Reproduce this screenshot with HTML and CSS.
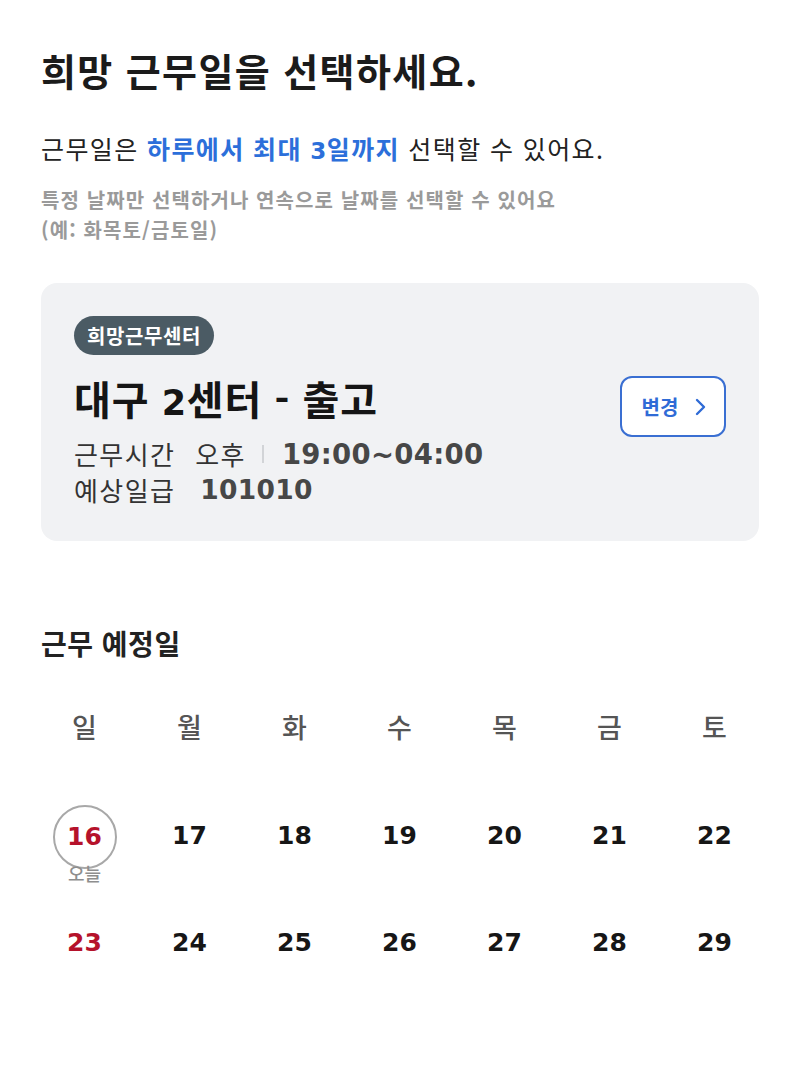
FILE: index.html
```html
<!DOCTYPE html>
<html lang="ko">
<head>
<meta charset="utf-8">
<link rel="stylesheet" href="styles.css">
</head>
<body>
<div class="page">
  <h1 class="title">희망 근무일을 선택하세요.</h1>
  <p class="lead">근무일은 <b class="blue">하루에서 최대 <span class="d">3</span>일까지</b> 선택할 수 있어요.</p>
  <p class="note">특정 날짜만 선택하거나 연속으로 날짜를 선택할 수 있어요<br>(예: 화목토/금토일)</p>

  <div class="card">
    <div class="card-main">
      <span class="badge">희망근무센터</span>
      <div class="center-name">대구 <span class="d">2</span>센터 - 출고</div>
      <div class="info first"><span class="label">근무시간</span><span class="val-r">오후</span><span class="sep"></span><span class="val-b">19:00~04:00</span></div>
      <div class="info"><span class="label">예상일급</span><span class="val-b">101010</span></div>
    </div>
    <button class="change">변경<svg width="16" height="20" viewBox="0 0 16 20"><path d="M5 3 L12 10 L5 17" fill="none" stroke="#2f6bd6" stroke-width="2.4" stroke-linecap="round" stroke-linejoin="round"/></svg></button>
  </div>

  <h2 class="section">근무 예정일</h2>
</div>
<div class="cal">
  <div class="wd">일</div><div class="wd">월</div><div class="wd">화</div><div class="wd">수</div><div class="wd">목</div><div class="wd">금</div><div class="wd">토</div>
  <div class="day sun today"><span class="circle">16</span><span class="today-lbl">오늘</span></div>
  <div class="day">17</div><div class="day">18</div><div class="day">19</div><div class="day">20</div><div class="day">21</div><div class="day">22</div>
  <div class="day sun">23</div>
  <div class="day">24</div><div class="day">25</div><div class="day">26</div><div class="day">27</div><div class="day">28</div><div class="day">29</div>
</div>
</body>
</html>
```
FILE: styles.css
```css
* { box-sizing: border-box; }
html, body { margin: 0; padding: 0; background: #fff; }
body {
  font-family: "Noto Sans CJK KR", "Noto Sans", sans-serif;
  color: #1a1a1a;
  width: 800px;
}
.d { font-family: "DejaVu Sans", "Noto Sans CJK KR", sans-serif; font-weight: 700; }
.page { padding: 40px 41px 0 41px; }
.title {
  margin: 0;
  font-size: 38px;
  font-weight: 700;
  line-height: 60px;
  letter-spacing: 1.4px;
  color: #1b1b1b;
}
.lead {
  margin: 30px 0 0 0;
  font-size: 25px;
  line-height: 36px;
  color: #222;
  letter-spacing: 1.4px;
}
.lead .d { font-size: 23px; letter-spacing: 0.5px; }
.blue { color: #2c6fda; font-weight: 700; }
.note {
  margin: 16px 0 0 0;
  font-size: 20px;
  line-height: 30px;
  color: #9a9a9a;
  font-weight: 700;
  letter-spacing: 1.1px;
}
.card {
  margin-top: 38px;
  background: #f1f2f4;
  border-radius: 16px;
  height: 258px;
  padding: 33px 33px 0 33px;
  display: flex;
  justify-content: space-between;
  align-items: flex-start;
}
.badge {
  display: inline-block;
  background: #4b5b64;
  color: #fff;
  font-size: 20px;
  font-weight: 700;
  line-height: 39px;
  height: 39px;
  padding: 0 13px;
  border-radius: 20px;
  letter-spacing: 0.6px;
}
.center-name {
  margin-top: 18px;
  font-size: 40px;
  font-weight: 700;
  line-height: 50px;
  color: #151515;
  letter-spacing: 1px;
}
.center-name .d { font-size: 35px; letter-spacing: 0.5px; }
.info {
  display: flex;
  align-items: center;
  font-size: 26px;
  line-height: 36px;
  color: #333;
  letter-spacing: 1.4px;
}
.info.first { margin-top: 8px; }
.label { margin-right: 20px; }
.sep { width: 2px; height: 18px; background: #d2d4d7; margin: 0 18px 0 16px; }
.val-b {
  font-family: "DejaVu Sans", sans-serif;
  font-weight: 700;
  font-size: 27.5px;
  color: #474747;
  letter-spacing: 0.3px;
}
.label + .val-b { margin-left: 5px; font-size: 26.5px; }
.change {
  margin-top: 60px;
  width: 106px;
  height: 61px;
  background: #fff;
  border: 2px solid #3a6fd2;
  border-radius: 12px;
  color: #2f6bd6;
  font-family: inherit;
  font-size: 20px;
  font-weight: 700;
  display: flex;
  align-items: center;
  justify-content: center;
  gap: 14px;
  padding: 0 0 0 4px;
}
.section {
  margin: 82px 0 0 0;
  font-size: 28px;
  font-weight: 600;
  line-height: 40px;
  color: #222;
  letter-spacing: 0.5px;
}
.cal {
  display: grid;
  grid-template-columns: repeat(7, 105px);
  padding-left: 32px;
  margin-top: 44px;
}
.wd {
  text-align: center;
  font-size: 27px;
  line-height: 40px;
  color: #555;
  font-weight: 500;
  margin-bottom: 58px;
}
.day {
  text-align: center;
  font-family: "DejaVu Sans", sans-serif;
  font-size: 25px;
  font-weight: 700;
  height: 107px;
  line-height: 62px;
  color: #161616;
  position: relative;
}
.sun { color: #b5122b; }
.circle {
  display: inline-block;
  width: 64px;
  height: 64px;
  border: 2px solid #a8a8a8;
  border-radius: 50%;
  line-height: 60px;
}
.today-lbl {
  position: absolute;
  left: 0;
  right: 0;
  top: 58px;
  font-family: "Noto Sans CJK KR", sans-serif;
  font-size: 18px;
  font-weight: 500;
  letter-spacing: 0;
  line-height: 20px;
  color: #8e8e8e;
}
```
